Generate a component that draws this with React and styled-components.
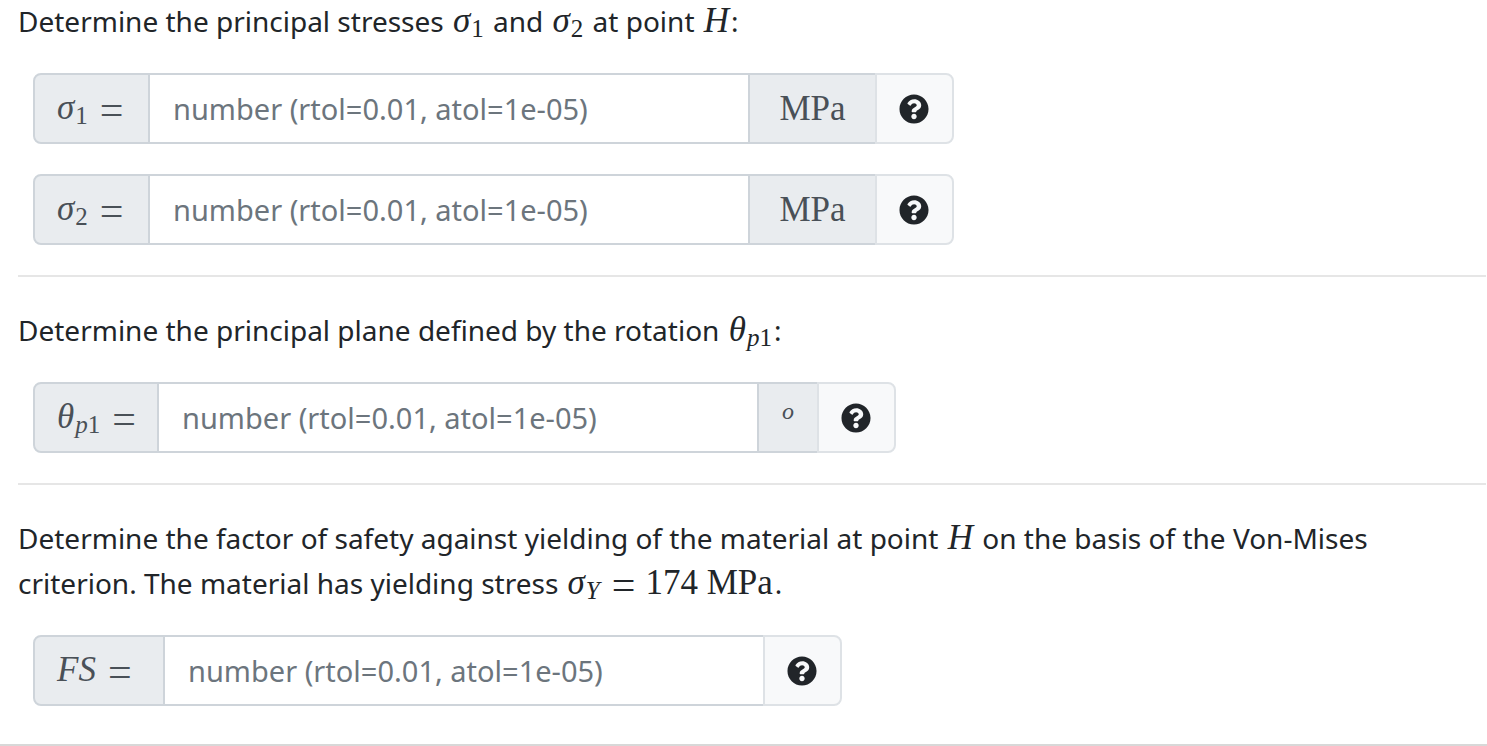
import React from "react";
import styled, { createGlobalStyle } from "styled-components";
import { FaQuestionCircle } from "react-icons/fa";

const GlobalStyle = createGlobalStyle`
  *, *::before, *::after { box-sizing: border-box; }
  body {
    margin: 0;
    background: #fff;
    color: #212529;
    font-family: "Noto Sans", "Open Sans", sans-serif;
    font-size: 28px;
    line-height: 45px;
  }
`;

const Page = styled.main`
  margin-top: -2px;
  padding-bottom: 8px;
  border-bottom: 2px solid #d8d8d8;
`;

const Question = styled.form`
  display: flex;
  flex-direction: column;
  gap: 30px;
  padding: 0 1px 30px 18px;
`;

const Prompt = styled.p`
  margin: 1px 0 -1px;
`;

const Divider = styled.hr`
  width: 100%;
  height: 2px;
  margin: 0;
  border: 0;
  background: #e6e6e6;
`;

const Math = styled.span`
  margin: 0 2px;
  font-family: "Liberation Serif", serif;
  font-size: 35px;
  line-height: 1;
  white-space: nowrap;
`;

const Var = styled.i`
  font-style: italic;
`;

const Relation = styled.span`
  margin: 0 10px 0 12px;
  font-size: 42px;
  line-height: 36px;
  vertical-align: -5px;
`;

const Sub = styled.sub`
  margin-left: 1px;
  font-size: 25px;
  line-height: 1;
  vertical-align: -5px;
  font-style: ${(p) => (p.$italic ? "italic" : "normal")};
`;

const Degree = styled.sup`
  font-size: 24px;
  line-height: 1;
  font-style: italic;
  vertical-align: 12px;
`;

const InputGroup = styled.div`
  display: flex;
  height: 71px;
  margin: 0 15px;
`;

const Addon = styled.span`
  display: flex;
  align-items: center;
  justify-content: center;
  width: ${(p) => p.$width}px;
  border: 2px solid #ced4da;
  background: #e9ecef;
  color: #495057;
`;

const LabelAddon = styled(Addon).attrs({ as: "label" })`
  justify-content: flex-start;
  padding-left: 20px;
  border-radius: 8px 0 0 8px;
`;

const UnitAddon = styled(Addon)`
  margin-left: -2px;
`;

const NumberInput = styled.input`
  flex: 0 1 602px;
  min-width: 0;
  margin-left: -2px;
  padding: 0 23px;
  border: 2px solid #ced4da;
  border-radius: 0;
  background: #fff;
  color: #495057;
  font: inherit;
  font-size: 29px;
  &::placeholder { color: #6c757d; opacity: 1; }
`;

const HelpButton = styled.button`
  display: flex;
  align-items: center;
  justify-content: center;
  width: 79px;
  margin-left: -2px;
  padding: 0 2px 0 0;
  border: 2px solid #dee2e6;
  border-radius: 0 8px 8px 0;
  background: #f8f9fa;
  color: #212529;
  font-size: 30px;
  cursor: pointer;
`;

function Answer({ id, label, labelWidth, unit, unitWidth }) {
  return (
    <InputGroup>
      <LabelAddon htmlFor={id} $width={labelWidth}>
        <Math>
          {label}
          <Relation>=</Relation>
        </Math>
      </LabelAddon>
      <NumberInput id={id} type="text" placeholder="number (rtol=0.01, atol=1e-05)" />
      {unit && (
        <UnitAddon $width={unitWidth}>
          <Math>{unit}</Math>
        </UnitAddon>
      )}
      <HelpButton type="button" aria-label="Help">
        <FaQuestionCircle />
      </HelpButton>
    </InputGroup>
  );
}

const sigma = (index, italic) => (
  <>
    <Var>σ</Var>
    <Sub $italic={italic}>{index}</Sub>
  </>
);

const thetaP1 = (
  <>
    <Var>θ</Var>
    <Sub>
      <Var>p</Var>1
    </Sub>
  </>
);

export default function App() {
  return (
    <>
      <GlobalStyle />
      <Page>
        <Question>
          <Prompt>
            Determine the principal stresses <Math>{sigma(1)}</Math> and <Math>{sigma(2)}</Math> at
            point <Math><Var>H</Var></Math>:
          </Prompt>
          <Answer id="sigma1" label={sigma(1)} labelWidth={117} unit="MPa" unitWidth={129} />
          <Answer id="sigma2" label={sigma(2)} labelWidth={117} unit="MPa" unitWidth={129} />
          <Divider />
          <Prompt>
            Determine the principal plane defined by the rotation <Math>{thetaP1}</Math>:
          </Prompt>
          <Answer id="theta" label={thetaP1} labelWidth={126} unit={<Degree>o</Degree>} unitWidth={62} />
          <Divider />
          <Prompt>
            Determine the factor of safety against yielding of the material at point{" "}
            <Math><Var>H</Var></Math> on the basis of the Von-Mises criterion. The material has
            yielding stress <Math>{sigma("Y", true)}<Relation>=</Relation>174 MPa</Math>.
          </Prompt>
          <Answer id="fs" label={<Var>FS</Var>} labelWidth={132} />
        </Question>
      </Page>
    </>
  );
}
